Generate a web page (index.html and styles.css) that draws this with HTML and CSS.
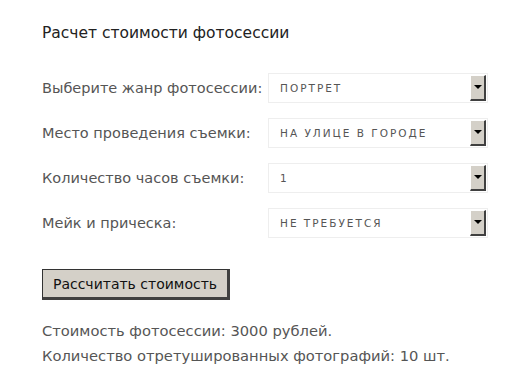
FILE: index.html
```html
<!DOCTYPE html>
<html lang="ru">
<head>
    <meta charset="utf-8">
    <title>Расчет стоимости фотосессии</title>
    <link rel="stylesheet" href="styles.css">
</head>
<body>
    <div id="calc">
        <h3>Расчет стоимости фотосессии</h3>

        <div class="row">
            <label>Выберите жанр фотосессии:</label>
            <div class="select"><span>Портрет</span><b class="arrow"></b></div>
        </div>
        <div class="row">
            <label>Место проведения съемки:</label>
            <div class="select"><span>На улице в городе</span><b class="arrow"></b></div>
        </div>
        <div class="row">
            <label>Количество часов съемки:</label>
            <div class="select"><span>1</span><b class="arrow"></b></div>
        </div>
        <div class="row">
            <label>Мейк и прическа:</label>
            <div class="select"><span>Не требуется</span><b class="arrow"></b></div>
        </div>

        <button>Рассчитать стоимость</button>

        <p class="result">Стоимость фотосессии: 3000 рублей.</p>
        <p class="result">Количество отретушированных фотографий: 10 шт.</p>
    </div>
</body>
</html>
```

FILE: styles.css
```css
body {
    margin: 0;
    background-color: white;
    font-family: "DejaVu Sans", Verdana, sans-serif;
}
#calc {
    padding: 23px 0 0 42px;
}
h3 {
    margin: 0 0 30px 0;
    font-size: 15.5px;
    line-height: 20px;
    font-weight: normal;
    color: #222;
}
.row {
    display: flex;
    align-items: center;
    height: 30px;
    margin-bottom: 15px;
}
.row label {
    width: 226px;
    font-size: 14.5px;
    color: #555;
}
.select {
    display: flex;
    align-items: center;
    justify-content: space-between;
    box-sizing: border-box;
    width: 220px;
    height: 30px;
    padding: 1px 1px 2px 11px;
    border: 1px solid #eee;
    background-color: white;
}
.select span {
    font-size: 10.5px;
    letter-spacing: 2px;
    text-transform: uppercase;
    color: #555;
}
.arrow {
    display: flex;
    align-items: center;
    justify-content: center;
    box-sizing: border-box;
    width: 16px;
    height: 26px;
    background-color: #d4d0c8;
    border-top: 1px solid #fff;
    border-left: 1px solid #fff;
    border-right: 2px solid #404040;
    border-bottom: 2px solid #404040;
}
.arrow::after {
    content: "";
    border-left: 4px solid transparent;
    border-right: 4px solid transparent;
    border-top: 4px solid black;
}
button {
    display: block;
    margin-top: 31px;
    width: 188px;
    height: 31px;
    padding: 0;
    background-color: #d4d0c8;
    border-top: 1px solid #333;
    border-left: 1px solid #333;
    border-right: 3px solid #404040;
    border-bottom: 3px solid #404040;
    font-family: "DejaVu Sans", Verdana, sans-serif;
    font-size: 14px;
    color: #111;
}
.result {
    margin: 0;
    font-size: 14.7px;
    line-height: 25px;
    color: #555;
}
button + .result {
    margin-top: 18px;
}
```
